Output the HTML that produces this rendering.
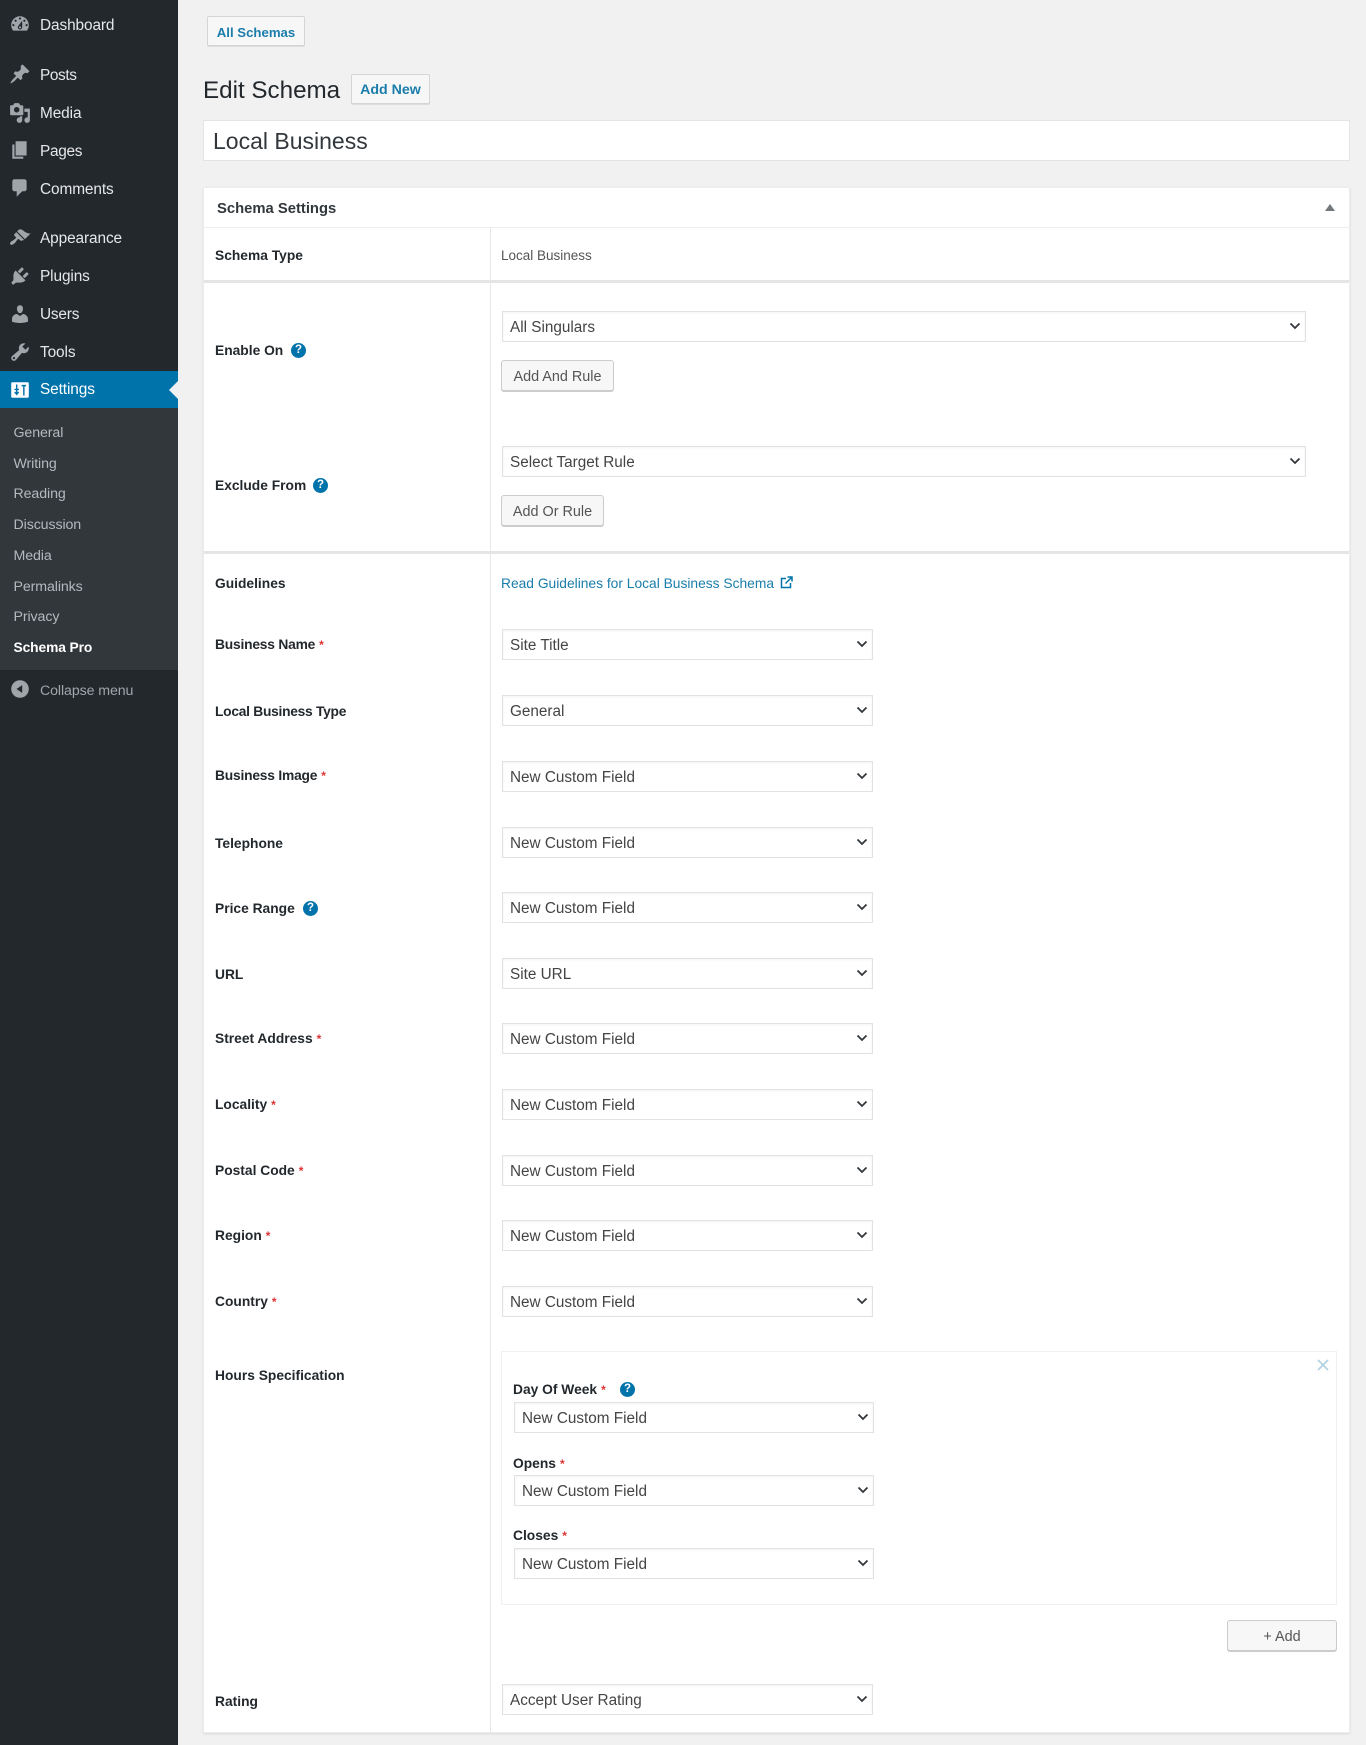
<!DOCTYPE html>
<html lang="en"><head><meta charset="utf-8"><title>Edit Schema</title>
<style>
*{box-sizing:border-box}
html,body{margin:0;padding:0}
html{background:#f1f1f1}
body{width:1366px;height:1745px;position:relative;overflow:hidden;background:#f1f1f1;font-family:"Liberation Sans",Arial,sans-serif;color:#23282d;filter:blur(.35px)}
.a{position:absolute;white-space:nowrap}
#side{position:absolute;left:0;top:0;width:178px;height:1745px;background:#23282d}
.m{position:absolute;left:40px;font-size:15.4px;line-height:20px;color:#e6e7e8;white-space:nowrap;margin-top:.7px;letter-spacing:-.1px}
.i{position:absolute;left:9px;width:22px;height:22px;fill:#a0a5aa}
.s{position:absolute;left:13.5px;font-size:14.2px;line-height:20px;color:#b4b9be;white-space:nowrap;margin-top:.5px;letter-spacing:-.1px}
.l{position:absolute;left:215px;font-size:13.8px;line-height:18px;font-weight:700;color:#23282d;white-space:nowrap;margin-top:1px}
.n{letter-spacing:-.2px}
.st{color:#dc3232;font-size:12px;margin-left:4px;font-weight:700}
.sel{position:absolute;height:31px;background:#fff;border:1px solid #e2e2e2;box-shadow:inset 0 1px 2px rgba(0,0,0,.05);font-size:15.3px;line-height:31px;padding-left:7px;color:#444;white-space:nowrap}
.sel svg{position:absolute;right:4px;top:10px;width:12px;height:8px;fill:none;stroke:#32373c;stroke-width:1.800}
.w{left:502px;width:371px}
.h{position:absolute;width:15px;height:15px;border-radius:50%;background:#0073aa;color:#fff;font:700 11.5px/15px "Liberation Sans",sans-serif;text-align:center}
.b{position:absolute;background:#f7f7f7;border:1px solid #ccc;box-shadow:0 1px 0 #ccc;border-radius:3px;color:#555;font-size:14.4px;text-align:center;white-space:nowrap}
.t{position:absolute;background:#f7f7f7;border:1px solid #d5d5d5;border-radius:2px;color:#1a7dab;font-size:14.2px;font-weight:700;text-align:center;white-space:nowrap}
</style></head><body>
<div id="side"></div>
<div class="a" style="left:0;top:371px;width:178px;height:37px;background:#0073aa"></div>
<div class="a" style="left:0;top:408px;width:178px;height:262px;background:#32373c"></div>
<div class="a" style="left:169px;top:381px;width:0;height:0;border:9px solid transparent;border-left:0;border-right:9px solid #f1f1f1"></div>

<svg class="i" style="top:13px" viewBox="0 0 20 20"><path d="M3.76 16h12.48c1.1-1.37 1.76-3.11 1.76-5 0-4.42-3.58-8-8-8s-8 3.58-8 8c0 1.89.66 3.63 1.76 5zM10 4c.55 0 1 .45 1 1s-.45 1-1 1-1-.45-1-1 .45-1 1-1zM6 6c.55 0 1 .45 1 1s-.45 1-1 1-1-.45-1-1 .45-1 1-1zm8 0c.55 0 1 .45 1 1s-.45 1-1 1-1-.45-1-1 .45-1 1-1zm-5.37 5.55L12 7v6c0 1.1-.9 2-2 2s-2-.9-2-2c0-.57.24-1.08.63-1.45zM4 10c.55 0 1 .45 1 1s-.45 1-1 1-1-.45-1-1 .45-1 1-1zm12 0c.55 0 1 .45 1 1s-.45 1-1 1-1-.45-1-1 .45-1 1-1zm-5 3c0-.55-.45-1-1-1s-1 .45-1 1 .45 1 1 1 1-.45 1-1z" fill-rule="evenodd"/></svg>
<div class="m" style="top:15.500px">Dashboard</div>
<svg class="i" style="top:63px" viewBox="0 0 20 20"><path d="M10.44 3.02l1.82-1.82 6.36 6.35-1.83 1.82c-1.05-.68-2.48-.57-3.41.36l-.75.75c-.92.93-1.04 2.35-.35 3.41l-1.83 1.82-2.41-2.41-2.8 2.79c-.42.42-3.38 2.71-3.8 2.29s1.86-3.39 2.28-3.81l2.79-2.79L4.1 9.36l1.83-1.82c1.05.69 2.48.57 3.4-.36l.75-.75c.93-.92 1.05-2.35.36-3.41z"/></svg>
<div class="m" style="top:65px;letter-spacing:-.4px">Posts</div>
<svg class="i" style="top:102px" viewBox="0 0 20 20"><path fill-rule="evenodd" d="M13 11V4c0-.55-.45-1-1-1h-1.67L9 1H5L3.67 3H2c-.55 0-1 .45-1 1v7c0 .55.45 1 1 1h10c.55 0 1-.45 1-1zM7 4.500c1.38 0 2.500 1.120 2.500 2.500S8.380 9.500 7 9.500 4.500 8.380 4.500 7 5.620 4.500 7 4.500zM14 6h5v10.500c0 1.380-1.120 2.500-2.500 2.500S14 17.880 14 16.500s1.120-2.500 2.500-2.500c.17 0 .34.020.5.050V9h-3V6zm-4 8.050V13h2v3.500c0 1.380-1.120 2.500-2.500 2.500S7 17.880 7 16.500 8.120 14 9.500 14c.17 0 .34.020.5.050z"/></svg>
<div class="m" style="top:103px">Media</div>
<svg class="i" style="top:139px" viewBox="0 0 20 20"><path d="M6 15V2h10v13H6zm-1 1h8v2H3V5h2v11z"/></svg>
<div class="m" style="top:141px;letter-spacing:-.3px">Pages</div>
<svg class="i" style="top:177px" viewBox="0 0 20 20"><path d="M5 2h9c1.100 0 2 .9 2 2v7c0 1.100-.9 2-2 2h-2l-5 5v-5H5c-1.100 0-2-.9-2-2V4c0-1.100.9-2 2-2z"/></svg>
<div class="m" style="top:179px">Comments</div>
<svg class="i" style="top:227px" viewBox="0 0 20 20"><path d="M14.480 11.060L7.410 3.990l1.500-1.500c.5-.56 2.300-.47 3.510.32 1.210.8 1.430 1.280 2.910 2.100 1.180.64 2.450 1.260 4.450.85zm-.71.71L6.700 4.700 4.930 6.470c-.39.39-.39 1.020 0 1.410l1.060 1.060c.39.39.39 1.030 0 1.420-.6.6-1.430 1.110-2.210 1.690-.35.26-.7.53-1.010.84C1.430 13.230.4 14.850 1.400 15.850s2.620-.03 3.960-1.370c.31-.31.58-.66.84-1.010.58-.78 1.090-1.610 1.690-2.210.39-.39 1.020-.39 1.410 0l1.060 1.060c.39.39 1.020.39 1.410 0z"/></svg>
<div class="m" style="top:228.500px">Appearance</div>
<svg class="i" style="top:265px" viewBox="0 0 20 20"><path d="M13.110 4.360L9.870 7.600 8 5.730l3.240-3.240c.35-.34 1.050-.2 1.560.32.52.51.66 1.210.31 1.550zm-8 1.770l.91-1.120 9.010 9.010-1.190.84c-.71.71-2.630 1.160-3.820 1.160H6.140L4.900 17.260c-.59.59-1.540.59-2.120 0-.59-.58-.59-1.530 0-2.120l1.240-1.240v-3.880c0-1.130.4-3.190 1.090-3.890zm7.260 3.970l3.240-3.240c.34-.35 1.040-.21 1.550.31.52.51.66 1.210.31 1.550l-3.240 3.250z"/></svg>
<div class="m" style="top:266.500px">Plugins</div>
<svg class="i" style="top:303px" viewBox="0 0 20 20"><path d="M10 9.250c-2.270 0-2.730-3.440-2.730-3.440C7 4.020 7.820 2 9.970 2c2.160 0 2.980 2.020 2.710 3.810 0 0-.41 3.440-2.680 3.440zm0 2.570L12.720 10c2.390 0 4.520 2.330 4.520 4.530v2.490s-3.650 1.130-7.240 1.130c-3.650 0-7.240-1.130-7.240-1.130v-2.490c0-2.250 1.940-4.480 4.470-4.480z"/></svg>
<div class="m" style="top:304px;letter-spacing:-.2px">Users</div>
<svg class="i" style="top:341px" viewBox="0 0 20 20"><path fill-rule="evenodd" d="M16.680 9.770c-1.340 1.340-3.300 1.670-4.950.99l-5.410 6.520c-.99.99-2.590.99-3.580 0s-.99-2.590 0-3.570l6.520-5.420c-.68-1.650-.35-3.610.99-4.950 1.280-1.280 3.120-1.620 4.720-1.060l-2.890 2.890 2.820 2.820 2.860-2.870c.53 1.580.18 3.390-1.080 4.650zM3.810 16.210c.4.39 1.040.39 1.430 0 .4-.4.4-1.040 0-1.430-.39-.4-1.030-.4-1.430 0-.39.39-.39 1.030 0 1.430z"/></svg>
<div class="m" style="top:342px">Tools</div>
<svg class="i" style="top:378.500px;fill:#fff" viewBox="0 0 20 20"><path d="M3 3h14c.55 0 1 .45 1 1v12c0 .55-.45 1-1 1H3c-.55 0-1-.45-1-1V4c0-.55.45-1 1-1z"/><path d="M5 9.500h4M7 5v9M5.200 11.800L7 14l1.800-2.200M11.500 6h4M13.500 6v9" fill="none" stroke="#0073aa" stroke-width="1.300"/></svg>
<div class="m" style="top:379.500px;color:#fff">Settings</div>

<div class="s" style="top:422px">General</div>
<div class="s" style="top:453px">Writing</div>
<div class="s" style="top:483px">Reading</div>
<div class="s" style="top:514.500px">Discussion</div>
<div class="s" style="top:545px">Media</div>
<div class="s" style="top:576px">Permalinks</div>
<div class="s" style="top:606px">Privacy</div>
<div class="s" style="top:637px;color:#fff;font-weight:700;font-size:13.800px">Schema Pro</div>
<svg class="i" style="top:678px" viewBox="0 0 20 20"><path fill-rule="evenodd" d="M10 2a8 8 0 1 1 0 16 8 8 0 0 1 0-16zm2 4.500L6.800 10 12 13.500z"/></svg>
<div class="s" style="left:40px;top:680px;color:#a0a5aa">Collapse menu</div>

<div class="t" style="left:207px;top:16px;width:98px;height:30px;line-height:32px;box-shadow:0 1px 0 #ddd;font-size:13.200px">All Schemas</div>
<div class="a" style="left:203px;top:73px;font-size:24.200px;line-height:36px;color:#23282d">Edit Schema</div>
<div class="t" style="left:351px;top:74px;width:79px;height:30px;line-height:31.500px;box-shadow:0 1px 0 #ddd">Add New</div>
<div class="a" style="left:203px;top:120px;width:1147px;height:41px;background:#fff;border:1px solid #e4e4e4;font-size:23px;line-height:41px;padding-left:9px;color:#32373c">Local Business</div>

<div class="a" style="left:203px;top:187px;width:1147px;height:1546px;background:#fff;border:1px solid #ececec;box-shadow:0 1px 2px rgba(0,0,0,.1)"></div>
<div class="a" style="left:204px;top:227px;width:1145px;height:1px;background:#eee"></div>
<div class="a" style="left:490px;top:228px;width:1px;height:1504px;background:#e8e8e8"></div>
<div class="a" style="left:204px;top:280px;width:1145px;height:3px;background:#e5e5e5"></div>
<div class="a" style="left:204px;top:551px;width:1145px;height:3px;background:#e5e5e5"></div>
<div class="a" style="left:217px;top:198.500px;font-size:14.800px;line-height:20px;font-weight:700;color:#32373c">Schema Settings</div>
<div class="a" style="left:1324.500px;top:204px;width:0;height:0;border:5px solid transparent;border-top:0;border-bottom:7px solid #72777c"></div>

<div class="l" style="top:246px">Schema Type</div>
<div class="a" style="left:501px;top:245.500px;font-size:13.500px;line-height:19px;color:#555">Local Business</div>

<div class="l" style="top:341px">Enable On</div>
<div class="h" style="left:291px;top:342.500px">?</div>
<div class="sel" style="left:502px;top:311px;width:803.500px">All Singulars<svg viewBox="0 0 12 8"><path d="M1.500 1.500L6 6l4.500-4.500"/></svg></div>
<div class="b" style="left:501px;top:360px;width:113px;height:31px;line-height:32px">Add And Rule</div>
<div class="l" style="top:476px">Exclude From</div>
<div class="h" style="left:313px;top:477.500px">?</div>
<div class="sel" style="left:502px;top:446px;width:803.500px">Select Target Rule<svg viewBox="0 0 12 8"><path d="M1.500 1.500L6 6l4.500-4.500"/></svg></div>
<div class="b" style="left:501px;top:495px;width:103px;height:31px;line-height:32px">Add Or Rule</div>

<div class="l" style="top:574px">Guidelines</div>
<div class="a" style="left:501px;top:573.500px;font-size:13.800px;line-height:20px;color:#1a7dab">Read Guidelines for Local Business Schema</div>
<svg class="a" style="left:780px;top:576px;width:13px;height:13px" viewBox="0 0 13 13" fill="none" stroke="#0073aa" stroke-width="1.500"><path d="M6 2.500H1.500v9h9V7M7.500 1h4.500v4.500M12 1L5.500 7.500"/></svg>

<div class="l n" style="top:635px">Business Name<span class="st">*</span></div>
<div class="sel w" style="top:629px">Site Title<svg viewBox="0 0 12 8"><path d="M1.500 1.500L6 6l4.500-4.500"/></svg></div>
<div class="l n" style="top:702px;letter-spacing:-.27px">Local Business Type</div>
<div class="sel w" style="top:695px">General<svg viewBox="0 0 12 8"><path d="M1.500 1.500L6 6l4.500-4.500"/></svg></div>
<div class="l n" style="top:766px">Business Image<span class="st">*</span></div>
<div class="sel w" style="top:761px">New Custom Field<svg viewBox="0 0 12 8"><path d="M1.500 1.500L6 6l4.500-4.500"/></svg></div>
<div class="l" style="top:834px">Telephone</div>
<div class="sel w" style="top:827px">New Custom Field<svg viewBox="0 0 12 8"><path d="M1.500 1.500L6 6l4.500-4.500"/></svg></div>
<div class="l" style="top:899px">Price Range</div>
<div class="h" style="left:303px;top:900.500px">?</div>
<div class="sel w" style="top:892px">New Custom Field<svg viewBox="0 0 12 8"><path d="M1.500 1.500L6 6l4.500-4.500"/></svg></div>
<div class="l" style="top:965px">URL</div>
<div class="sel w" style="top:958px">Site URL<svg viewBox="0 0 12 8"><path d="M1.500 1.500L6 6l4.500-4.500"/></svg></div>
<div class="l" style="top:1029px">Street Address<span class="st">*</span></div>
<div class="sel w" style="top:1023px">New Custom Field<svg viewBox="0 0 12 8"><path d="M1.500 1.500L6 6l4.500-4.500"/></svg></div>
<div class="l" style="top:1095px">Locality<span class="st">*</span></div>
<div class="sel w" style="top:1089px">New Custom Field<svg viewBox="0 0 12 8"><path d="M1.500 1.500L6 6l4.500-4.500"/></svg></div>
<div class="l" style="top:1160.500px">Postal Code<span class="st">*</span></div>
<div class="sel w" style="top:1155px">New Custom Field<svg viewBox="0 0 12 8"><path d="M1.500 1.500L6 6l4.500-4.500"/></svg></div>
<div class="l" style="top:1226px">Region<span class="st">*</span></div>
<div class="sel w" style="top:1220px">New Custom Field<svg viewBox="0 0 12 8"><path d="M1.500 1.500L6 6l4.500-4.500"/></svg></div>
<div class="l" style="top:1292px">Country<span class="st">*</span></div>
<div class="sel w" style="top:1286px">New Custom Field<svg viewBox="0 0 12 8"><path d="M1.500 1.500L6 6l4.500-4.500"/></svg></div>

<div class="l" style="top:1366px">Hours Specification</div>
<div class="a" style="left:501px;top:1351px;width:836px;height:254px;background:#fff;border:1px solid #f0f0f0"></div>
<svg class="a" style="left:1317px;top:1359px;width:12px;height:12px" viewBox="0 0 12 12" fill="none" stroke="#b5d3e3" stroke-width="1.800"><path d="M1 1l10 10M11 1L1 11"/></svg>
<div class="l" style="left:513px;top:1380px">Day Of Week<span class="st">*</span></div>
<div class="h" style="left:620px;top:1382px">?</div>
<div class="sel" style="left:514px;top:1402px;width:360px">New Custom Field<svg viewBox="0 0 12 8"><path d="M1.500 1.500L6 6l4.500-4.500"/></svg></div>
<div class="l" style="left:513px;top:1454px">Opens<span class="st">*</span></div>
<div class="sel" style="left:514px;top:1475px;width:360px">New Custom Field<svg viewBox="0 0 12 8"><path d="M1.500 1.500L6 6l4.500-4.500"/></svg></div>
<div class="l" style="left:513px;top:1526px">Closes<span class="st">*</span></div>
<div class="sel" style="left:514px;top:1548px;width:360px">New Custom Field<svg viewBox="0 0 12 8"><path d="M1.500 1.500L6 6l4.500-4.500"/></svg></div>
<div class="b" style="left:1227px;top:1620px;width:110px;height:31px;line-height:33px">+ Add</div>
<div class="l" style="top:1692px">Rating</div>
<div class="sel w" style="top:1684px">Accept User Rating<svg viewBox="0 0 12 8"><path d="M1.500 1.500L6 6l4.500-4.500"/></svg></div>
</body></html>
